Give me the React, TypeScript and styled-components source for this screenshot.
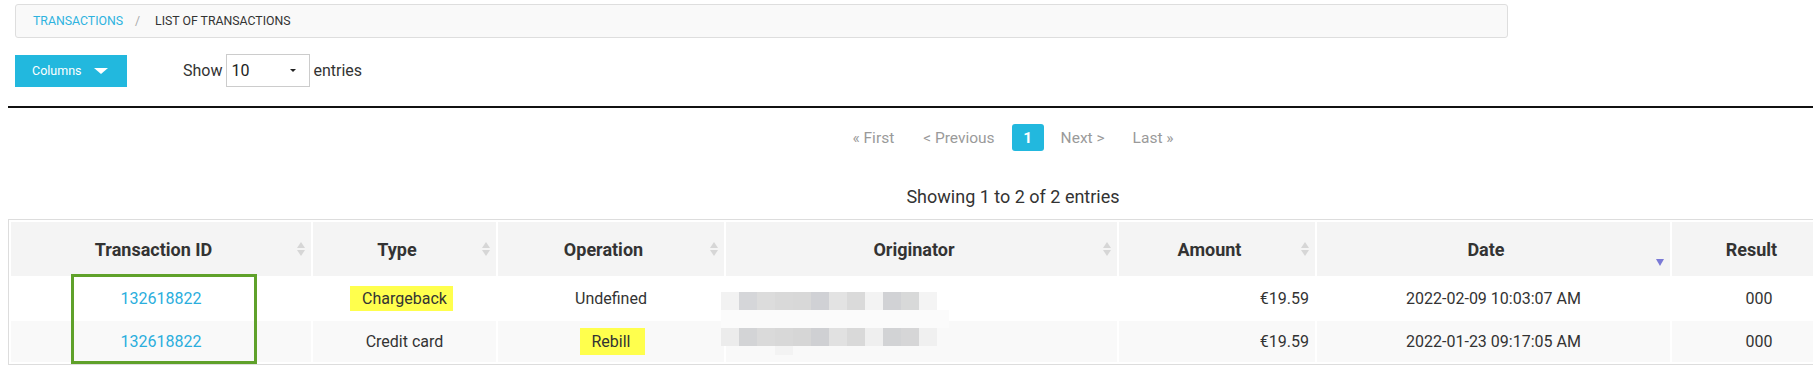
import React from "react";
import styled, { createGlobalStyle } from "styled-components";

const GlobalStyle = createGlobalStyle`
  html, body {
    margin: 0;
    padding: 0;
    background: #ffffff;
    overflow: hidden;
  }
  body {
    font-family: Roboto, "Liberation Sans", Arial, sans-serif;
    color: #333333;
  }
`;

const Page = styled.div`
  width: 2010px;
  padding: 4px 0 0 8px;
`;

const TopSection = styled.div`
  padding: 0 7px;
`;

const Breadcrumb = styled.nav`
  box-sizing: border-box;
  width: 1493px;
  height: 34px;
  display: flex;
  align-items: center;
  padding-left: 17px;
  background: #f9f9f9;
  border: 1px solid #dedede;
  border-radius: 3px;
  font-size: 12.3px;
  text-transform: uppercase;
`;

const Crumb = styled.span<{ $active?: boolean }>`
  color: ${(p) => (p.$active ? "#333333" : "#2db3df")};
`;

const CrumbSep = styled.span`
  color: #aaaaaa;
  margin: 0 15px 0 12px;
`;

const Controls = styled.div`
  display: flex;
  align-items: center;
  margin-top: 16px;
  height: 33px;
`;

const ColumnsButton = styled.button`
  box-sizing: border-box;
  width: 112px;
  height: 32px;
  display: flex;
  align-items: center;
  padding: 0 0 0 17px;
  border: none;
  background: #22b8de;
  color: #ffffff;
  font-family: inherit;
  font-size: 12.5px;
`;

const Caret = styled.span<{ $w: number; $h: number; $color: string }>`
  display: inline-block;
  width: 0;
  height: 0;
  border-left: ${(p) => p.$w / 2}px solid transparent;
  border-right: ${(p) => p.$w / 2}px solid transparent;
  border-top: ${(p) => p.$h}px solid ${(p) => p.$color};
`;

const ButtonCaret = styled(Caret)`
  margin-left: 12px;
`;

const LengthControl = styled.label`
  display: flex;
  align-items: center;
  margin-left: 56px;
  font-size: 16px;
  color: #333333;
`;

const SelectBox = styled.div`
  box-sizing: border-box;
  width: 84px;
  height: 33px;
  margin: 0 3px 0 4px;
  display: flex;
  align-items: center;
  justify-content: space-between;
  padding: 0 13px 0 4px;
  border: 1px solid #cccccc;
  background: #ffffff;
  font-size: 16px;
  color: #222222;
`;

const Divider = styled.hr`
  margin: 19px 0 0 0;
  border: none;
  height: 2px;
  background: #111111;
`;

const Pagination = styled.div`
  display: flex;
  justify-content: center;
  align-items: center;
  gap: 17px;
  margin-top: 16px;
  height: 27px;
  font-size: 15.5px;
`;

const PageLink = styled.span<{ $outer?: "left" | "right" }>`
  color: #9a9a9a;
  margin-right: ${(p) => (p.$outer === "left" ? "12px" : "0")};
  margin-left: ${(p) => (p.$outer === "right" ? "11px" : "0")};
`;

const PageCurrent = styled.span`
  box-sizing: border-box;
  width: 32px;
  height: 27px;
  display: flex;
  align-items: center;
  justify-content: center;
  border-radius: 3px;
  background: #22b8de;
  color: #ffffff;
  font-weight: 700;
`;

const Info = styled.div`
  margin-top: 35px;
  text-align: center;
  font-size: 18px;
  line-height: 21px;
  color: #333333;
`;

const TableWrap = styled.div`
  position: relative;
  margin-top: 12px;
`;

const Table = styled.table`
  width: 2010px;
  table-layout: fixed;
  border-collapse: separate;
  border-spacing: 2px;
  border: 1px solid #dddddd;
`;

const HeadCell = styled.th`
  position: relative;
  height: 54px;
  padding: 0 25px 0 10px;
  background: #f4f4f4;
  font-size: 18px;
  font-weight: 700;
  color: #333333;
  text-align: center;
  white-space: nowrap;
`;

const Row = styled.tr<{ $striped?: boolean }>`
  background: ${(p) => (p.$striped ? "#f9f9f9" : "#ffffff")};
`;

const Cell = styled.td<{ $align?: "center" | "right" }>`
  height: 41px;
  padding: 0 6px;
  font-size: 16px;
  color: #333333;
  text-align: ${(p) => p.$align ?? "center"};
  white-space: nowrap;
`;

const IdLink = styled.a`
  color: #2aaedd;
  text-decoration: none;
`;

const Highlight = styled.span<{ $left: number; $right: number; $y: number }>`
  display: inline-block;
  background: #ffff4d;
  padding: ${(p) => `${p.$y}px ${p.$right}px ${p.$y}px ${p.$left}px`};
  margin-left: ${(p) => p.$right - p.$left}px;
`;

const SortIcon = styled.span`
  position: absolute;
  right: 6px;
  top: 50%;
  transform: translateY(-50%);
  display: flex;
  flex-direction: column;
  gap: 2px;
`;

const SortArrow = styled.span<{ $dir: "up" | "down"; $color: string }>`
  width: 0;
  height: 0;
  border-left: 4.5px solid transparent;
  border-right: 4.5px solid transparent;
  ${(p) =>
    p.$dir === "up"
      ? `border-bottom: 6px solid ${p.$color};`
      : `border-top: 6px solid ${p.$color};`}
`;

const SortDesc = styled.span`
  position: absolute;
  right: 6px;
  bottom: 10px;
  width: 0;
  height: 0;
  border-left: 4.5px solid transparent;
  border-right: 4.5px solid transparent;
  border-top: 7px solid #7a7ad6;
`;

const Annotation = styled.div`
  position: absolute;
  left: 63px;
  top: 55px;
  width: 186px;
  height: 90px;
  box-sizing: border-box;
  border: 3px solid #5fa12a;
  pointer-events: none;
`;

const Redaction = styled.svg`
  position: absolute;
  left: 713px;
  top: 73px;
`;

type Col = { title: string; width: number; sort: "both" | "desc" | "none" };

const columns: Col[] = [
  { title: "Transaction ID", width: 300, sort: "both" },
  { title: "Type", width: 183, sort: "both" },
  { title: "Operation", width: 226, sort: "both" },
  { title: "Originator", width: 391, sort: "both" },
  { title: "Amount", width: 196, sort: "both" },
  { title: "Date", width: 353, sort: "desc" },
  { title: "Result", width: 174, sort: "both" },
  { title: "", width: 167, sort: "none" },
];

const row1 = ["#f2f2f2", "#d5d6d9", "#dcdcdc", "#d9d9d9", "#d8d8d8", "#d0d1d5", "#e3e3e3", "#dadada", "#f3f3f3", "#d1d2d5", "#d8d9d9", "#f4f4f4"];
const row2 = ["#ececec", "#d3d4d6", "#dadada", "#d8d8d8", "#d6d6d6", "#cfd0d3", "#e1e1e1", "#d9d9d9", "#efefef", "#d2d3d5", "#d6d6d7", "#f0f0f0"];

const RedactionBlocks = () => (
  <Redaction width={236} height={82} viewBox="0 0 236 82">
    {row1.map((c, i) => (
      <rect key={`a${i}`} x={i * 18} y={0} width={18} height={18} fill={c} />
    ))}
    <rect x={0} y={18} width={228} height={18} fill="#fbfbfb" />
    {row2.map((c, i) => (
      <rect key={`b${i}`} x={i * 18} y={36} width={18} height={18} fill={c} />
    ))}
    <rect x={54} y={54} width={18} height={9} fill="#f3f3f3" />
  </Redaction>
);

const SortMark = ({ sort }: { sort: Col["sort"] }) => {
  if (sort === "desc") return <SortDesc />;
  if (sort === "none") return null;
  return (
    <SortIcon>
      <SortArrow $dir="up" $color="#d6d6d6" />
      <SortArrow $dir="down" $color="#d6d6d6" />
    </SortIcon>
  );
};

export default function App() {
  return (
    <>
      <GlobalStyle />
      <Page>
        <TopSection>
          <Breadcrumb>
            <Crumb>Transactions</Crumb>
            <CrumbSep>/</CrumbSep>
            <Crumb $active>List of transactions</Crumb>
          </Breadcrumb>
          <Controls>
            <ColumnsButton>
              Columns
              <ButtonCaret $w={14} $h={6} $color="#ffffff" />
            </ColumnsButton>
            <LengthControl>
              Show
              <SelectBox>
                <span>10</span>
                <Caret $w={6} $h={3} $color="#222222" />
              </SelectBox>
              entries
            </LengthControl>
          </Controls>
        </TopSection>
        <Divider />
        <Pagination>
          <PageLink $outer="left">« First</PageLink>
          <PageLink>&lt; Previous</PageLink>
          <PageCurrent>1</PageCurrent>
          <PageLink>Next &gt;</PageLink>
          <PageLink $outer="right">Last »</PageLink>
        </Pagination>
        <Info>Showing 1 to 2 of 2 entries</Info>
        <TableWrap>
          <Table>
            <colgroup>
              {columns.map((c, i) => (
                <col key={i} style={{ width: c.width }} />
              ))}
            </colgroup>
            <thead>
              <tr>
                {columns.map((c, i) => (
                  <HeadCell key={i}>
                    {c.title}
                    <SortMark sort={c.sort} />
                  </HeadCell>
                ))}
              </tr>
            </thead>
            <tbody>
              <Row>
                <Cell>
                  <IdLink href="#">132618822</IdLink>
                </Cell>
                <Cell>
                  <Highlight $left={12} $right={6} $y={3}>
                    Chargeback
                  </Highlight>
                </Cell>
                <Cell>Undefined</Cell>
                <Cell />
                <Cell $align="right">€19.59</Cell>
                <Cell>2022-02-09 10:03:07 AM</Cell>
                <Cell>000</Cell>
                <Cell />
              </Row>
              <Row $striped>
                <Cell>
                  <IdLink href="#">132618822</IdLink>
                </Cell>
                <Cell>Credit card</Cell>
                <Cell>
                  <Highlight $left={12} $right={14} $y={4}>
                    Rebill
                  </Highlight>
                </Cell>
                <Cell />
                <Cell $align="right">€19.59</Cell>
                <Cell>2022-01-23 09:17:05 AM</Cell>
                <Cell>000</Cell>
                <Cell />
              </Row>
            </tbody>
          </Table>
          <RedactionBlocks />
          <Annotation />
        </TableWrap>
      </Page>
    </>
  );
}
